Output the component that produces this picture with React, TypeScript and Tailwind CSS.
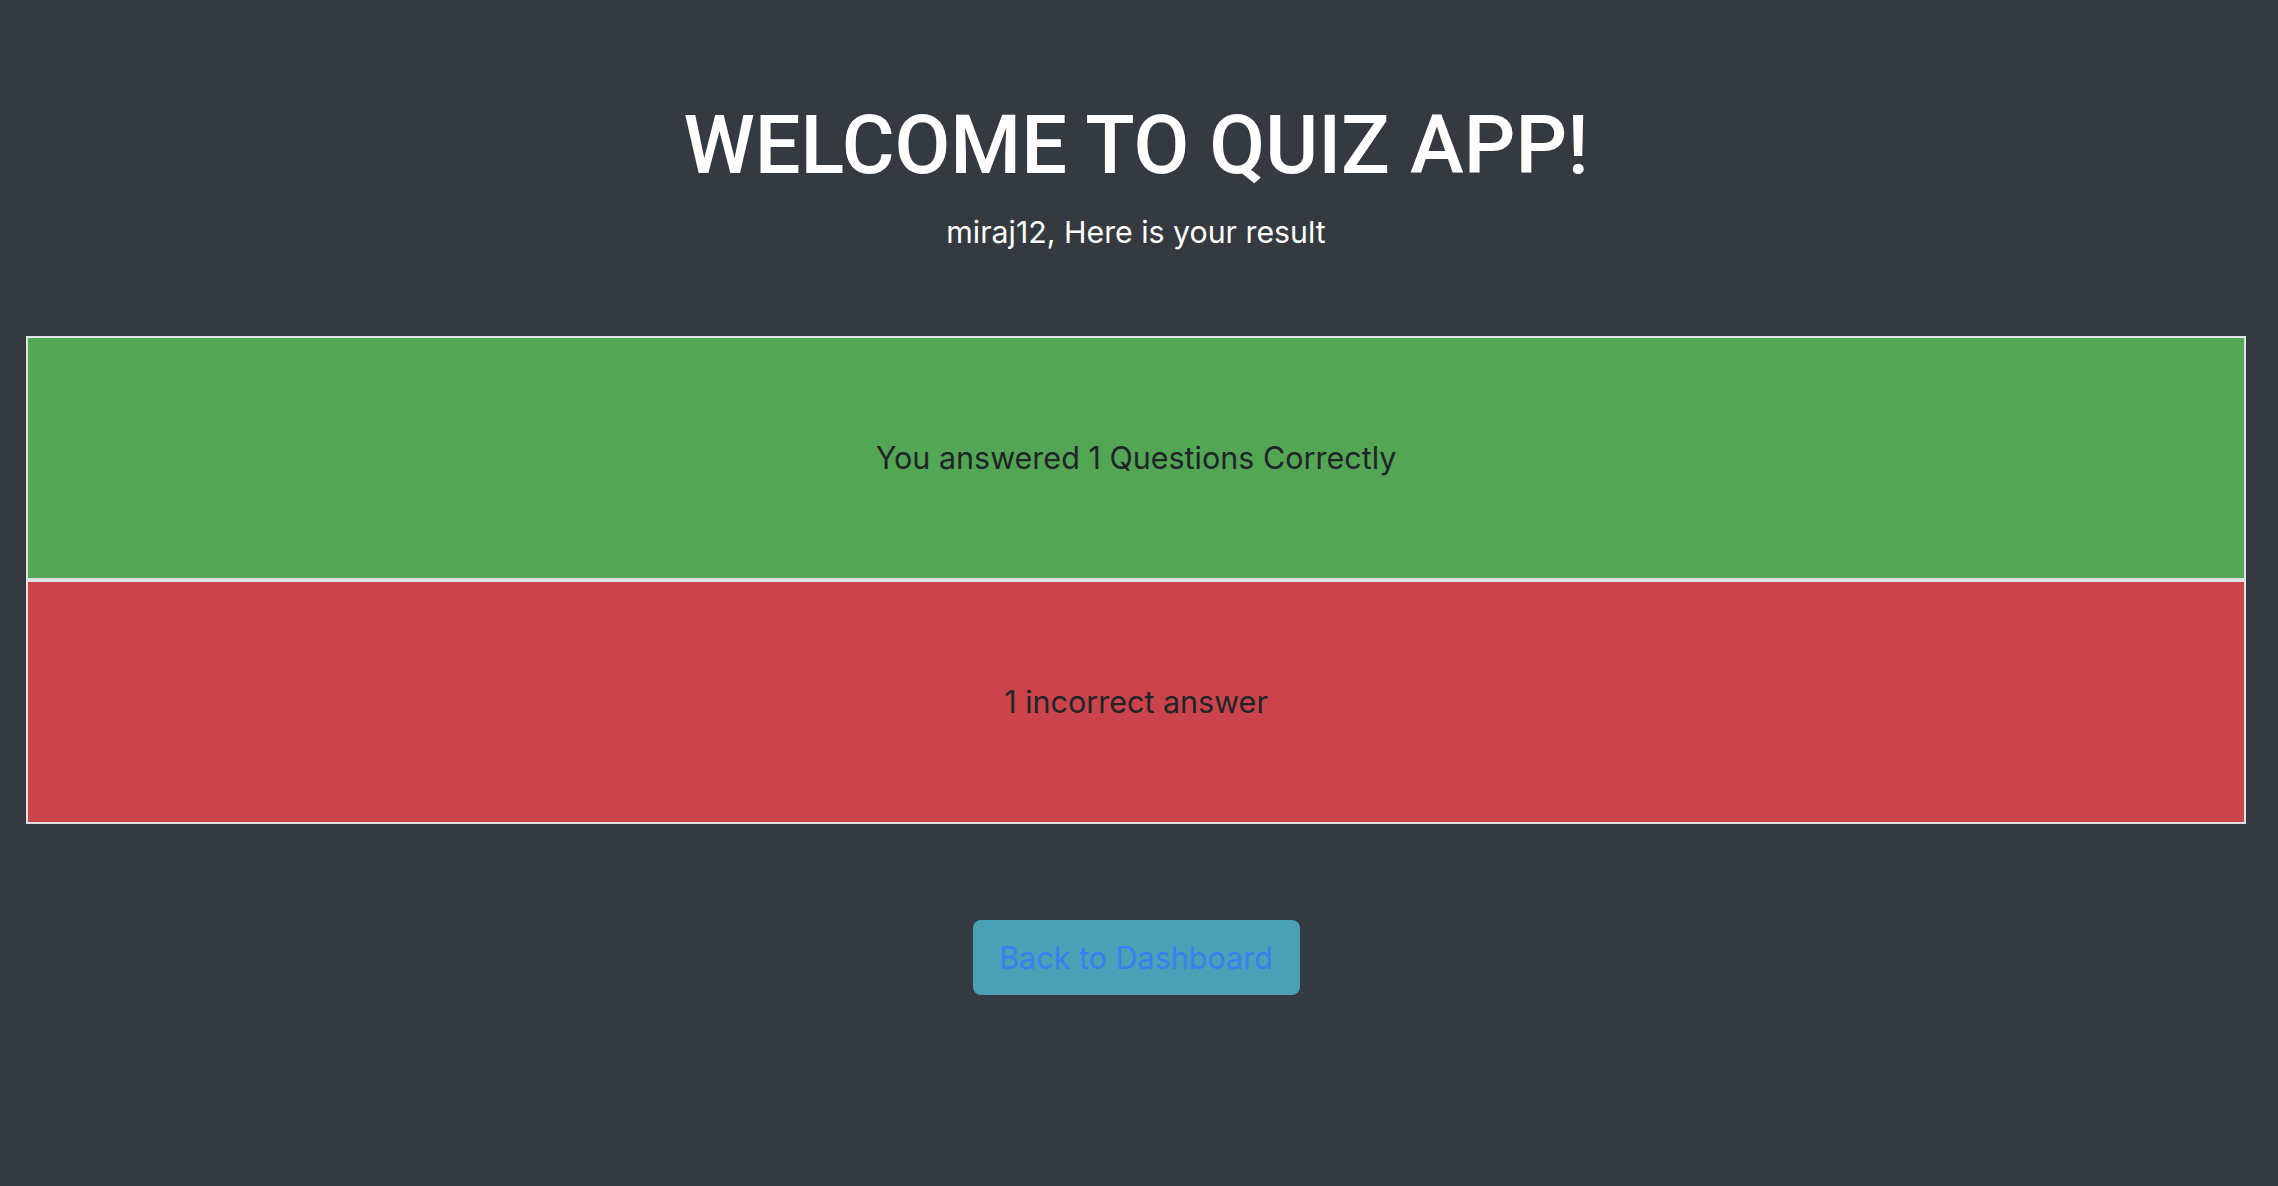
import React from "react";

const result = {
  username: "miraj12",
  correct: 1,
  incorrect: 1,
};

function ResultRow({ tone, children }: { tone: "success" | "danger"; children: React.ReactNode }) {
  const bg = tone === "success" ? "bg-[#53a653]" : "bg-[#cb444b]";
  return (
    <div className={`${bg} border-2 border-[#dee2e6] h-[244px] flex items-center justify-center`}>
      <span className="text-[30.5px] leading-[1.5] text-[#212529]">{children}</span>
    </div>
  );
}

export default function App() {
  return (
    <div
      className="min-h-[1186px] bg-[#343a40] pl-[26px] pr-[32px]"
      style={{ fontFamily: "Inter, 'Noto Sans', sans-serif" }}
    >
      {/* Header */}
      <div className="pt-[98px] flex flex-col items-center">
        <h1
          className="text-[81px] leading-[96px] font-medium text-white"
          style={{ fontFamily: "Roboto, 'Liberation Sans', sans-serif" }}
        >
          WELCOME TO QUIZ APP!
        </h1>
        <p className="mt-[17px] text-[30.3px] leading-[42px] text-white">
          {result.username}, Here is your result
        </p>
      </div>

      {/* Score table */}
      <div className="mt-[83px] flex flex-col">
        <ResultRow tone="success">You answered {result.correct} Questions Correctly</ResultRow>
        <ResultRow tone="danger">{result.incorrect} incorrect answer</ResultRow>
      </div>

      <div className="mt-[96px] flex justify-center">
        <button
          type="button"
          className="w-[327px] h-[75px] rounded-[8px] bg-[#4aa0b4] text-[30.5px] text-[#3b7df2]"
        >
          Back to Dashboard
        </button>
      </div>
    </div>
  );
}
